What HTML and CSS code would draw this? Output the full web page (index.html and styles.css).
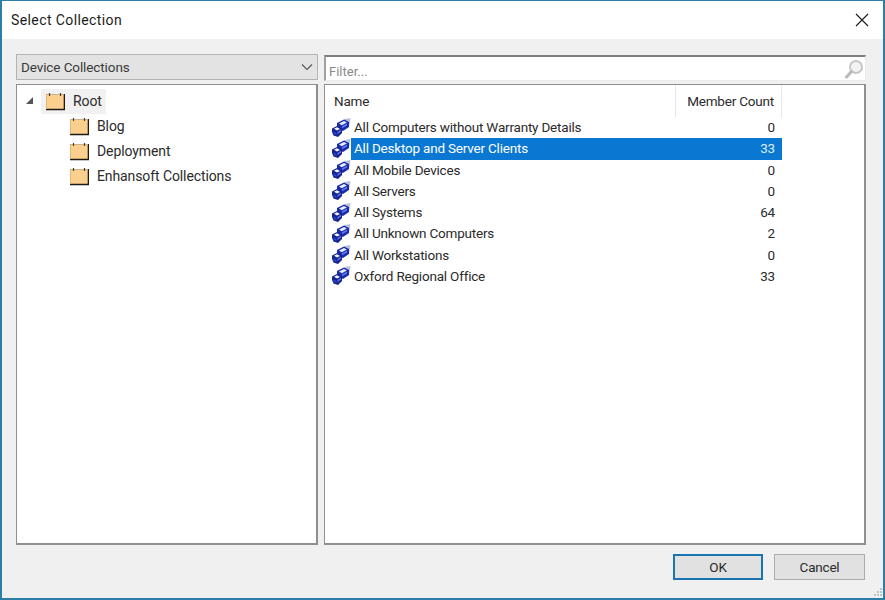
FILE: index.html
```html
<!DOCTYPE html>
<html lang="en">
<head>
<meta charset="utf-8">
<title>Select Collection</title>
<link rel="stylesheet" href="styles.css">
</head>
<body>
<svg class="defs" width="0" height="0" aria-hidden="true">
  <symbol id="folder" viewBox="0 0 20 20">
    <rect x="1" y="2" width="18" height="16" fill="#fbd08f"/>
    <path d="M1 17.5H19.5V2" fill="none" stroke="#1f1a14" stroke-width="1.6"/>
    <path d="M1 2.5H19" fill="none" stroke="#c9b38d" stroke-width="1"/>
    <path d="M4.5 1v3M15.5 1v3" stroke="#4a3c28" stroke-width="1.2"/>
    <path d="M1.5 3V17" stroke="#e0b878" stroke-width="1"/>
  </symbol>
  <symbol id="coll" viewBox="0 0 20 20">
    <path d="M13 1L19.5 0L18.5 7L15 5Z" fill="#b9c2dc"/>
    <path d="M6 5L13 1.5L18 4V9L12 13L6 10Z" fill="#1a2cab"/>
    <path d="M1 10.5L6 8L11 10.5V15L7 19L2.5 17.5L1 14Z" fill="#15238f"/>
    <path d="M8 5.5L13 3L15.8 4.5L10.8 7.2Z" fill="#e9edff"/>
    <path d="M11 8.3L16 5.5V7.5L11 10.3Z" fill="#5f78ea"/>
    <path d="M3 10.8L6 9.2L9 10.9L6 12.6Z" fill="#f4f6ff"/>
    <path d="M6.5 14L10 11.8V13.6L6.5 16Z" fill="#5f78ea"/>
    <path d="M2.5 13.5L5.5 15.2V17L2.5 15.4Z" fill="#2f47cf"/>
  </symbol>
</svg>

<div class="window">
  <header class="titlebar">
    <span class="title">Select Collection</span>
    <svg class="close" width="14" height="14" viewBox="0 0 14 14" aria-label="Close">
      <path d="M1 1L13 13M13 1L1 13" stroke="#1a1a1a" stroke-width="1.1" fill="none"/>
    </svg>
  </header>

  <main class="content">
    <div class="panes">
      <div class="combo">
        <span>Device Collections</span>
        <svg width="12" height="8" viewBox="0 0 12 8"><path d="M1 1.5L6 6.5L11 1.5" stroke="#5a5a5a" stroke-width="1.2" fill="none"/></svg>
      </div>
      <div class="filter">
        <span class="filter-text">Filter...</span>
        <svg class="search" width="20" height="20" viewBox="0 0 20 20">
          <circle cx="12" cy="8" r="6" fill="#f3f3f3" stroke="#c6c6c6" stroke-width="2"/>
          <path d="M7.5 12.5L2.5 18" stroke="#b9b9b9" stroke-width="3" stroke-linecap="round"/>
        </svg>
      </div>

      <div class="tree">
        <div class="tree-row root">
          <svg class="arrow" width="9" height="9" viewBox="0 0 9 9"><path d="M8 1V8H1Z" fill="#555"/></svg>
          <span class="root-item">
            <svg class="folder" width="20" height="20"><use href="#folder"/></svg>
            <span class="label">Root</span>
          </span>
        </div>
        <div class="tree-row child"><svg class="folder" width="20" height="20"><use href="#folder"/></svg><span class="label">Blog</span></div>
        <div class="tree-row child"><svg class="folder" width="20" height="20"><use href="#folder"/></svg><span class="label">Deployment</span></div>
        <div class="tree-row child"><svg class="folder" width="20" height="20"><use href="#folder"/></svg><span class="label">Enhansoft Collections</span></div>
      </div>

      <div class="list">
        <div class="list-head">
          <div class="head-name">Name</div>
          <div class="head-count">Member Count</div>
        </div>
        <div class="row"><svg class="coll" width="20" height="20"><use href="#coll"/></svg><div class="cell"><span class="name">All Computers without Warranty Details</span><span class="count">0</span></div></div>
        <div class="row selected"><svg class="coll" width="20" height="20"><use href="#coll"/></svg><div class="cell"><span class="name">All Desktop and Server Clients</span><span class="count">33</span></div></div>
        <div class="row"><svg class="coll" width="20" height="20"><use href="#coll"/></svg><div class="cell"><span class="name">All Mobile Devices</span><span class="count">0</span></div></div>
        <div class="row"><svg class="coll" width="20" height="20"><use href="#coll"/></svg><div class="cell"><span class="name">All Servers</span><span class="count">0</span></div></div>
        <div class="row"><svg class="coll" width="20" height="20"><use href="#coll"/></svg><div class="cell"><span class="name">All Systems</span><span class="count">64</span></div></div>
        <div class="row"><svg class="coll" width="20" height="20"><use href="#coll"/></svg><div class="cell"><span class="name">All Unknown Computers</span><span class="count">2</span></div></div>
        <div class="row"><svg class="coll" width="20" height="20"><use href="#coll"/></svg><div class="cell"><span class="name">All Workstations</span><span class="count">0</span></div></div>
        <div class="row"><svg class="coll" width="20" height="20"><use href="#coll"/></svg><div class="cell"><span class="name">Oxford Regional Office</span><span class="count">33</span></div></div>
      </div>
    </div>

    <footer class="actions">
      <button class="btn default" type="button">OK</button>
      <button class="btn" type="button">Cancel</button>
    </footer>
    <svg class="grip" width="12" height="12" viewBox="0 0 12 12" aria-hidden="true">
      <path d="M9 2h2v2H9zM6 5h2v2H6zM9 5h2v2H9zM3 8h2v2H3zM6 8h2v2H6zM9 8h2v2H9z" fill="#c4c4c4"/>
    </svg>
  </main>
</div>
</body>
</html>
```

FILE: styles.css
```css
* { box-sizing: border-box; }
html, body { margin: 0; padding: 0; }
body {
  width: 885px;
  height: 600px;
  overflow: hidden;
  font-family: Roboto, "Open Sans", "Liberation Sans", sans-serif;
  font-size: 13.5px;
  letter-spacing: -0.2px;
  color: #2b2b2b;
}
.defs { display: block; height: 0; }

.window {
  width: 885px;
  height: 600px;
  display: flex;
  flex-direction: column;
  border: 1px solid #2b7ea6;
  border-bottom-width: 2px;
  border-left-width: 2px;
  border-right-width: 2px;
  background: #f0f0f0;
}

.titlebar {
  height: 38px;
  flex: none;
  background: #fff;
  display: flex;
  align-items: center;
  justify-content: space-between;
  padding: 0 14px 1px 9px;
}
.title { font-size: 14px; color: #1c1c1c; letter-spacing: 0.4px; }
.close { margin-top: 1px; }

.content {
  flex: 1;
  position: relative;
  display: flex;
  flex-direction: column;
  padding: 15px 18px 0 14px;
}

.panes {
  display: grid;
  grid-template-columns: 302px 542px;
  grid-template-rows: 30px 461px;
  column-gap: 6px;
}

.combo {
  height: 26px;
  background: #e3e3e3;
  border: 1px solid #b4b4b4;
  display: flex;
  align-items: center;
  justify-content: space-between;
  padding: 0 4px;
  letter-spacing: -0.1px;
  color: #3a3a3a;
}

.filter {
  height: 26px;
  margin-top: 1px;
  background: #fff;
  border-top: 2px solid #7f7f7f;
  border-left: 2px solid #a0a0a0;
  border-right: 1px solid #ececec;
  border-bottom: 1px solid #ececec;
  display: flex;
  align-items: center;
  justify-content: space-between;
  padding: 0 1px 0 3px;
  font-size: 13px;
  letter-spacing: 0;
  color: #8a8a8a;
}
.filter-text { margin-top: 5px; }

.tree, .list {
  background: #fff;
  border: 1px solid #8f8f8f;
  border-bottom-width: 2px;
  border-right-width: 2px;
}

.tree { padding-top: 4px; font-size: 14px; letter-spacing: -0.1px; }
.tree-row {
  height: 25px;
  display: flex;
  align-items: center;
}
.root { padding-left: 8px; }
.arrow { flex: none; margin-right: 7px; margin-top: -2px; }
.root-item {
  display: flex;
  align-items: center;
  height: 25px;
  background: #f1f1f1;
  padding: 0 4px 0 4px;
}
.child { padding-left: 52px; }
.label { margin-left: 8px; margin-bottom: 1px; }

.list-head {
  height: 32px;
  display: flex;
}
.head-name {
  width: 351px;
  padding: 8px 0 0 9px;
  border-right: 1px solid #e6e6e6;
}
.head-count {
  width: 106px;
  padding: 8px 7px 0 0;
  text-align: right;
  border-right: 1px solid #e6e6e6;
}

.row {
  height: 21.25px;
  display: flex;
  align-items: center;
  padding-left: 6px;
}
.coll { flex: none; }
.cell {
  width: 431px;
  height: 100%;
  display: flex;
  align-items: center;
  justify-content: space-between;
  padding: 0 7px 1px 3px;
}
.selected .cell { background: #0a78d2; color: #fff; }
.selected .count { color: #d8ecff; }

.actions {
  display: flex;
  justify-content: flex-end;
  gap: 11px;
  padding: 9px 0 0 0;
}
.btn {
  width: 91px;
  height: 26px;
  font: inherit;
  letter-spacing: inherit;
  color: #2b2b2b;
  background: #e1e1e1;
  border: 1px solid #adadad;
  padding: 0;
}
.btn.default {
  width: 90px;
  border: 2px solid #1a74b0;
}

.grip { position: absolute; right: 0; bottom: 0; }
```
